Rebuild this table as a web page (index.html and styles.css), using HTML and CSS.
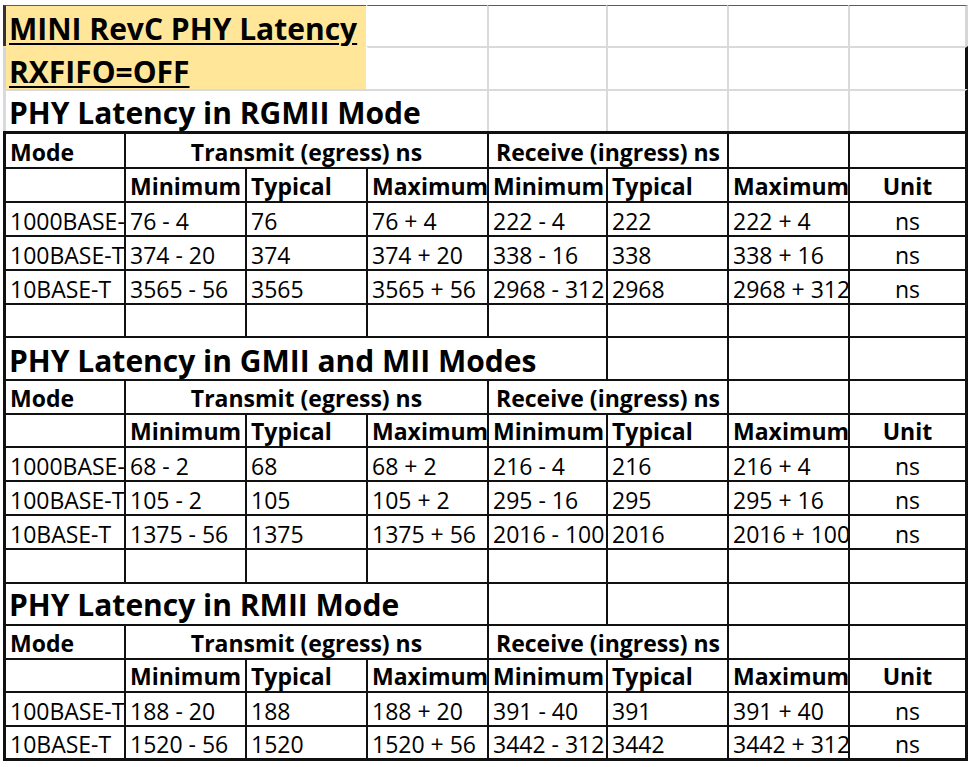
FILE: index.html
```html
<!DOCTYPE html>
<html lang="en">
<head>
<meta charset="utf-8">
<title>MINI RevC PHY Latency</title>
<link rel="stylesheet" href="styles.css">
</head>
<body>
<div class="sheet">
  <div class="row row--first">
    <div class="cell cell--a cell--hl cell--title cell--u cell--pb-mini span3">MINI RevC PHY Latency</div>
    <div class="cell cell--grid cell--nol"></div>
    <div class="cell cell--grid"></div>
    <div class="cell cell--grid"></div>
    <div class="cell cell--grid"></div>
    <div class="cell cell--grid cell--h cell--h-grid"></div>
  </div>
  <div class="row row--tall">
    <div class="cell cell--a cell--hl cell--hl2 cell--title cell--u cell--pb-rx span3">RXFIFO=OFF</div>
    <div class="cell cell--grid cell--nol"></div>
    <div class="cell cell--grid"></div>
    <div class="cell cell--grid"></div>
    <div class="cell cell--grid"></div>
    <div class="cell cell--grid cell--h"></div>
  </div>
  <div class="row row--title">
    <div class="cell cell--a cell--grid cell--title cell--pb-rg span4">PHY Latency in RGMII Mode</div>
    <div class="cell cell--grid"></div>
    <div class="cell cell--grid"></div>
    <div class="cell cell--grid"></div>
    <div class="cell cell--grid cell--h"></div>
  </div>

  <div class="row row--head row--thick">
    <div class="cell cell--a cell--b">Mode</div>
    <div class="cell cell--b cell--c span3">Transmit (egress) ns</div>
    <div class="cell cell--b cell--c span2">Receive (ingress) ns</div>
    <div class="cell"></div>
    <div class="cell cell--h"></div>
  </div>
  <div class="row">
    <div class="cell cell--a"></div>
    <div class="cell cell--b">Minimum</div>
    <div class="cell cell--b">Typical</div>
    <div class="cell cell--b">Maximum</div>
    <div class="cell cell--b">Minimum</div>
    <div class="cell cell--b">Typical</div>
    <div class="cell cell--b">Maximum</div>
    <div class="cell cell--b cell--c cell--h">Unit</div>
  </div>
  <div class="row">
    <div class="cell cell--a">1000BASE-T</div>
    <div class="cell">76 - 4</div>
    <div class="cell">76</div>
    <div class="cell">76 + 4</div>
    <div class="cell">222 - 4</div>
    <div class="cell">222</div>
    <div class="cell">222 + 4</div>
    <div class="cell cell--c cell--h">ns</div>
  </div>
  <div class="row">
    <div class="cell cell--a">100BASE-TX</div>
    <div class="cell">374 - 20</div>
    <div class="cell">374</div>
    <div class="cell">374 + 20</div>
    <div class="cell">338 - 16</div>
    <div class="cell">338</div>
    <div class="cell">338 + 16</div>
    <div class="cell cell--c cell--h">ns</div>
  </div>
  <div class="row">
    <div class="cell cell--a">10BASE-T</div>
    <div class="cell">3565 - 56</div>
    <div class="cell">3565</div>
    <div class="cell">3565 + 56</div>
    <div class="cell">2968 - 312</div>
    <div class="cell">2968</div>
    <div class="cell">2968 + 312</div>
    <div class="cell cell--c cell--h">ns</div>
  </div>
  <div class="row row--33">
    <div class="cell cell--a"></div>
    <div class="cell"></div>
    <div class="cell"></div>
    <div class="cell"></div>
    <div class="cell"></div>
    <div class="cell"></div>
    <div class="cell"></div>
    <div class="cell cell--h"></div>
  </div>

  <div class="row row--tall">
    <div class="cell cell--a cell--title cell--pb-gm span5">PHY Latency in GMII and MII Modes</div>
    <div class="cell"></div>
    <div class="cell"></div>
    <div class="cell cell--h"></div>
  </div>
  <div class="row">
    <div class="cell cell--a cell--b">Mode</div>
    <div class="cell cell--b cell--c span3">Transmit (egress) ns</div>
    <div class="cell cell--b cell--c span2">Receive (ingress) ns</div>
    <div class="cell"></div>
    <div class="cell cell--h"></div>
  </div>
  <div class="row row--33">
    <div class="cell cell--a"></div>
    <div class="cell cell--b">Minimum</div>
    <div class="cell cell--b">Typical</div>
    <div class="cell cell--b">Maximum</div>
    <div class="cell cell--b">Minimum</div>
    <div class="cell cell--b">Typical</div>
    <div class="cell cell--b">Maximum</div>
    <div class="cell cell--b cell--c cell--h">Unit</div>
  </div>
  <div class="row">
    <div class="cell cell--a">1000BASE-T</div>
    <div class="cell">68 - 2</div>
    <div class="cell">68</div>
    <div class="cell">68 + 2</div>
    <div class="cell">216 - 4</div>
    <div class="cell">216</div>
    <div class="cell">216 + 4</div>
    <div class="cell cell--c cell--h">ns</div>
  </div>
  <div class="row">
    <div class="cell cell--a">100BASE-TX</div>
    <div class="cell">105 - 2</div>
    <div class="cell">105</div>
    <div class="cell">105 + 2</div>
    <div class="cell">295 - 16</div>
    <div class="cell">295</div>
    <div class="cell">295 + 16</div>
    <div class="cell cell--c cell--h">ns</div>
  </div>
  <div class="row">
    <div class="cell cell--a">10BASE-T</div>
    <div class="cell">1375 - 56</div>
    <div class="cell">1375</div>
    <div class="cell">1375 + 56</div>
    <div class="cell">2016 - 100</div>
    <div class="cell">2016</div>
    <div class="cell">2016 + 100</div>
    <div class="cell cell--c cell--h">ns</div>
  </div>
  <div class="row">
    <div class="cell cell--a"></div>
    <div class="cell"></div>
    <div class="cell"></div>
    <div class="cell"></div>
    <div class="cell"></div>
    <div class="cell"></div>
    <div class="cell"></div>
    <div class="cell cell--h"></div>
  </div>

  <div class="row row--title">
    <div class="cell cell--a cell--title cell--pb-rm span4">PHY Latency in RMII Mode</div>
    <div class="cell"></div>
    <div class="cell"></div>
    <div class="cell"></div>
    <div class="cell cell--h"></div>
  </div>
  <div class="row">
    <div class="cell cell--a cell--b">Mode</div>
    <div class="cell cell--b cell--c span3">Transmit (egress) ns</div>
    <div class="cell cell--b cell--c span2">Receive (ingress) ns</div>
    <div class="cell"></div>
    <div class="cell cell--h"></div>
  </div>
  <div class="row row--33">
    <div class="cell cell--a"></div>
    <div class="cell cell--b">Minimum</div>
    <div class="cell cell--b">Typical</div>
    <div class="cell cell--b">Maximum</div>
    <div class="cell cell--b">Minimum</div>
    <div class="cell cell--b">Typical</div>
    <div class="cell cell--b">Maximum</div>
    <div class="cell cell--b cell--c cell--h">Unit</div>
  </div>
  <div class="row">
    <div class="cell cell--a">100BASE-TX</div>
    <div class="cell">188 - 20</div>
    <div class="cell">188</div>
    <div class="cell">188 + 20</div>
    <div class="cell">391 - 40</div>
    <div class="cell">391</div>
    <div class="cell">391 + 40</div>
    <div class="cell cell--c cell--h">ns</div>
  </div>
  <div class="row row--last">
    <div class="cell cell--a">10BASE-T</div>
    <div class="cell">1520 - 56</div>
    <div class="cell">1520</div>
    <div class="cell">1520 + 56</div>
    <div class="cell">3442 - 312</div>
    <div class="cell">3442</div>
    <div class="cell">3442 + 312</div>
    <div class="cell cell--c cell--h">ns</div>
  </div>
</div>
</body>
</html>
```
FILE: styles.css
```css
* {
  box-sizing: border-box;
}

body {
  margin: 0;
  background: #ffffff;
  color: #000000;
  font-family: "Open Sans", "Noto Sans", sans-serif;
}

.sheet {
  margin: 5px 0 0 3px;
  width: 965px;
}

.row {
  display: grid;
  grid-template-columns: 121px 121px 121px 121px 119px 121px 121px 120px;
  height: 34px;
}

.row--first { height: 41px; }
.row--tall { height: 43px; }
.row--title { height: 42px; }
.row--head { height: 36px; }
.row--33 { height: 33px; }
.row--last { height: 36px; }

.cell {
  display: flex;
  align-items: flex-end;
  overflow: hidden;
  white-space: nowrap;
  border-top: 2px solid #111111;
  border-left: 2px solid #111111;
  padding: 0 0 2.5px 4px;
  font-size: 23px;
  font-weight: 400;
  line-height: 1;
}

.span2 { grid-column: span 2; }
.span3 { grid-column: span 3; }
.span4 { grid-column: span 4; }
.span5 { grid-column: span 5; }

.cell--a {
  border-left-width: 3px;
  padding-left: 4px;
}

.cell--h {
  border-right: 3px solid #111111;
}

.cell--b {
  font-weight: 700;
  padding-bottom: 3px;
}

.cell--c {
  justify-content: center;
  padding-left: 0;
}

.row--thick .cell {
  border-top-width: 3px;
}

.row--last .cell {
  border-bottom: 3px solid #111111;
}

/* upper spreadsheet area with plain grid lines */
.cell--grid {
  border-top-color: #dadada;
  border-left-color: #dadada;
}

.cell--grid.cell--h {
  border-right-color: #111111;
}

.cell--h-grid.cell--h {
  border-right-color: #d6d6d6;
}

.cell--nol {
  border-left-color: transparent;
}

.row--first .cell {
  border-top: 1px solid #5c5c5c;
}

.cell--hl {
  background: #ffe699;
  border-left-color: #333333;
}

.cell--hl2 {
  border-top-color: transparent;
  border-left-color: #d6d6d6;
}

.cell--title {
  font-size: 30px;
  font-weight: 700;
  padding-left: 3px;
  overflow: visible;
}

.cell--u {
  text-decoration: underline;
  text-decoration-thickness: 2px;
  text-underline-offset: 3px;
}

.cell--pb-mini { padding-bottom: 2px; }
.cell--pb-rx { padding-bottom: 2px; }
.cell--pb-rg { padding-bottom: 3.5px; }
.cell--pb-gm { padding-bottom: 3.5px; }
.cell--pb-rm { padding-bottom: 4px; }
```
